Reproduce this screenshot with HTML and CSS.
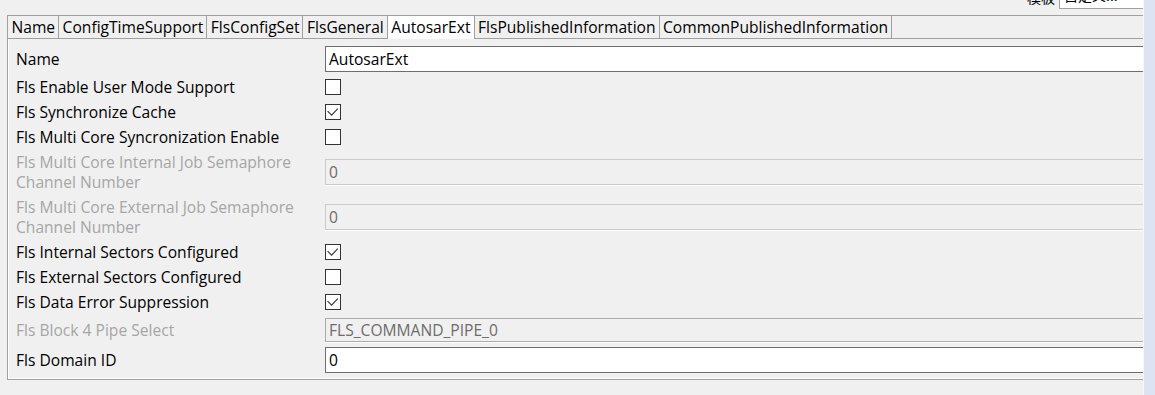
FILE: index.html
```html
<!DOCTYPE html>
<html>
<head>
<meta charset="utf-8">
<link rel="stylesheet" href="styles.css">
</head>
<body>
<div class="window">
  <div class="main">
    <div class="topbar">
      <div class="filter">
        <span class="filter-label">模板</span>
        <span class="filter-box">自定义...</span>
      </div>
    </div>
    <div class="folder">
      <div class="tabs">
        <div class="tab">Name</div>
        <div class="tab">ConfigTimeSupport</div>
        <div class="tab">FlsConfigSet</div>
        <div class="tab">FlsGeneral</div>
        <div class="tab active">AutosarExt</div>
        <div class="tab">FlsPublishedInformation</div>
        <div class="tab">CommonPublishedInformation</div>
      </div>
      <div class="panel">
        <div class="row r-name">
          <div class="label">Name</div>
          <div class="field">AutosarExt</div>
        </div>
        <div class="row r-check">
          <div class="label">Fls Enable User Mode Support</div>
          <svg class="cb" width="16" height="16" viewBox="0 0 16 16"><rect x="0.5" y="0.5" width="15" height="15" fill="#fff" stroke="#333"/></svg>
        </div>
        <div class="row r-check">
          <div class="label">Fls Synchronize Cache</div>
          <svg class="cb" width="16" height="16" viewBox="0 0 16 16"><rect x="0.5" y="0.5" width="15" height="15" fill="#fff" stroke="#333"/><path d="M2.6 7.2 L6.6 11.2 L12.8 4.6" fill="none" stroke="#3a3a3a" stroke-width="1.2"/></svg>
        </div>
        <div class="row r-check">
          <div class="label">Fls Multi Core Syncronization Enable</div>
          <svg class="cb" width="16" height="16" viewBox="0 0 16 16"><rect x="0.5" y="0.5" width="15" height="15" fill="#fff" stroke="#333"/></svg>
        </div>
        <div class="row r-tall">
          <div class="label disabled">Fls Multi Core Internal Job Semaphore<br>Channel Number</div>
          <div class="field off">0</div>
        </div>
        <div class="row r-tall">
          <div class="label disabled">Fls Multi Core External Job Semaphore<br>Channel Number</div>
          <div class="field off">0</div>
        </div>
        <div class="row r-check">
          <div class="label">Fls Internal Sectors Configured</div>
          <svg class="cb" width="16" height="16" viewBox="0 0 16 16"><rect x="0.5" y="0.5" width="15" height="15" fill="#fff" stroke="#333"/><path d="M2.6 7.2 L6.6 11.2 L12.8 4.6" fill="none" stroke="#3a3a3a" stroke-width="1.2"/></svg>
        </div>
        <div class="row r-check">
          <div class="label">Fls External Sectors Configured</div>
          <svg class="cb" width="16" height="16" viewBox="0 0 16 16"><rect x="0.5" y="0.5" width="15" height="15" fill="#fff" stroke="#333"/></svg>
        </div>
        <div class="row r-check">
          <div class="label">Fls Data Error Suppression</div>
          <svg class="cb" width="16" height="16" viewBox="0 0 16 16"><rect x="0.5" y="0.5" width="15" height="15" fill="#fff" stroke="#333"/><path d="M2.6 7.2 L6.6 11.2 L12.8 4.6" fill="none" stroke="#3a3a3a" stroke-width="1.2"/></svg>
        </div>
        <div class="row r-combo">
          <div class="label disabled">Fls Block 4 Pipe Select</div>
          <div class="field combo">FLS_COMMAND_PIPE_0</div>
        </div>
        <div class="row r-last">
          <div class="label">Fls Domain ID</div>
          <div class="field">0</div>
        </div>
      </div>
    </div>
  </div>
  <div class="scroll"></div>
</div>
</body>
</html>
```

FILE: styles.css
```css
html, body {
  margin: 0;
  padding: 0;
  background: #f0f0f0;
}

.window {
  display: flex;
  width: 1155px;
  height: 395px;
  overflow: hidden;
  font-family: "Open Sans", "Noto Sans CJK SC", sans-serif;
  font-size: 15.6px;
  color: #000;
}

.main {
  width: 1143px;
  overflow: hidden;
  flex: none;
}

.scroll {
  flex: 1;
  background: #dee3f4;
  border-left: 1px solid #f7f7f7;
}

/* top strip (clipped filter row) */
.topbar {
  height: 15px;
  overflow: hidden;
  display: flex;
  justify-content: flex-end;
  align-items: flex-start;
}

.filter {
  display: flex;
  align-items: flex-end;
  margin-top: -16px;
  font-family: "Noto Sans CJK SC", sans-serif;
  font-size: 14px;
}

.filter-label {
  line-height: 24px;
  margin-right: 4px;
}

.filter-box {
  box-sizing: border-box;
  width: 84px;
  height: 25px;
  line-height: 22px;
  background: #fff;
  border-left: 1px solid #a0a0a0;
  border-bottom: 1px solid #a0a0a0;
  padding-left: 4px;
}

/* tab folder */
.folder {
  margin-left: 7px;
  width: 1160px;
}

.tabs {
  display: flex;
  height: 22px;
  border-top: 1px solid #a0a0a0;
  border-bottom: 1px solid #a0a0a0;
  border-left: 1px solid #a0a0a0;
}

.tab {
  padding: 0 3px 0 3.5px;
  line-height: 22px;
  border-right: 1px solid #a0a0a0;
  white-space: nowrap;
}

.tab.active {
  background: #fff;
  height: 23px;
}

.panel {
  border-left: 1px solid #a0a0a0;
  border-bottom: 1px solid #a0a0a0;
  box-shadow: inset 1px 0 0 #fff, inset 0 -1px 0 #fff;
  padding: 4px 0 5px 8px;
}

.row {
  display: grid;
  grid-template-columns: 309px 1fr;
  align-items: center;
}

.r-name { height: 31px; }
.r-check { height: 25px; }
.r-tall { height: 45px; }
.r-combo { height: 31px; }
.r-last { height: 29px; }

.label {
  line-height: 20px;
  white-space: nowrap;
}

.label.disabled {
  color: #a6a6a6;
}

.cb {
  display: block;
}

.field {
  box-sizing: border-box;
  height: 26px;
  line-height: 24px;
  background: #fff;
  border: 1px solid #6e6e6e;
  border-right: none;
  padding-left: 3px;
  white-space: nowrap;
}

.field.off {
  background: #f0f0f0;
  border-color: #cacaca;
  color: #6d6d6d;
  box-shadow: 0 1px 0 #fff;
}

.field.combo {
  height: 24px;
  line-height: 22px;
  background: #f0f0f0;
  border-color: #ababab;
  color: #6d6d6d;
  box-shadow: 0 1px 0 #fff;
}
```
